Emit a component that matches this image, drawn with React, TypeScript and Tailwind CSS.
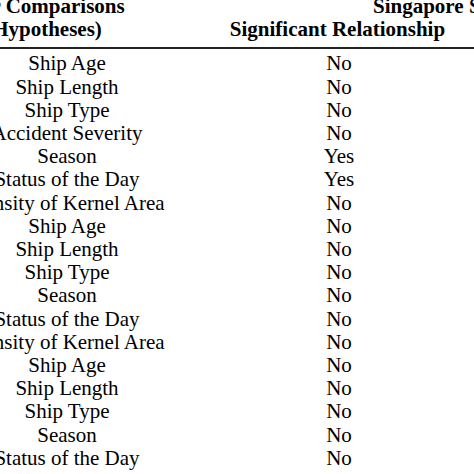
const rows = [
  { factor: "Ship Age", significant: "No" },
  { factor: "Ship Length", significant: "No" },
  { factor: "Ship Type", significant: "No" },
  { factor: "Accident Severity", significant: "No" },
  { factor: "Season", significant: "Yes" },
  { factor: "Status of the Day", significant: "Yes" },
  { factor: "Density of Kernel Area", significant: "No" },
  { factor: "Ship Age", significant: "No" },
  { factor: "Ship Length", significant: "No" },
  { factor: "Ship Type", significant: "No" },
  { factor: "Season", significant: "No" },
  { factor: "Status of the Day", significant: "No" },
  { factor: "Density of Kernel Area", significant: "No" },
  { factor: "Ship Age", significant: "No" },
  { factor: "Ship Length", significant: "No" },
  { factor: "Ship Type", significant: "No" },
  { factor: "Season", significant: "No" },
  { factor: "Status of the Day", significant: "No" },
]

export default function App() {
  return (
    <div className="w-[474px] h-[474px] overflow-hidden bg-white text-black font-['Liberation_Serif',serif] text-[21px] leading-[23.2px]">
      <div className="-mt-[5px] -ml-[63px] w-[544px]">
        {/* Header */}
        <div className="grid grid-cols-[260px_284px] font-bold whitespace-nowrap pb-[6px] border-b-2 border-solid border-[#222]">
          <div className="pr-[47px] text-center">Pair Comparisons</div>
          <div className="pl-[176px]">Singapore Strait</div>
          <div className="pr-[47px] text-center">(Hypotheses)</div>
          <div className="pr-[3px] text-center">Significant Relationship</div>
        </div>

        {/* Body */}
        <div className="pt-[3px] grid grid-cols-[260px_284px] whitespace-nowrap">
          {rows.map((row, index) => (
            <div key={index} className="contents">
              <div className="text-center">{row.factor}</div>
              <div className="text-center">{row.significant}</div>
            </div>
          ))}
        </div>
      </div>
    </div>
  )
}
